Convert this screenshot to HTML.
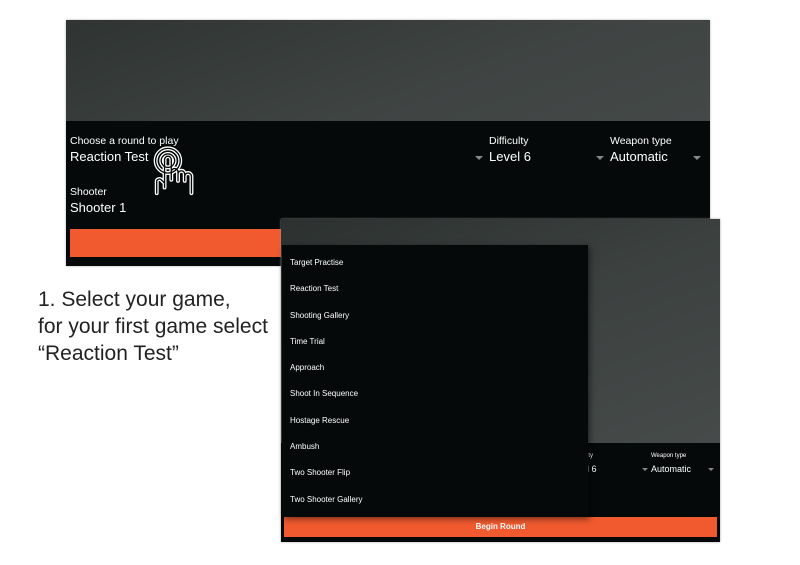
<!DOCTYPE html>
<html><head><style>
body{margin:0;width:800px;height:565px;background:#fff;position:relative;overflow:hidden;font-family:"Liberation Sans",sans-serif}
.abs{position:absolute}
.w{color:#fff}
.tri{position:absolute;width:0;height:0;border-left:4px solid transparent;border-right:4px solid transparent;border-top:4px solid #888}
.tri2{position:absolute;width:0;height:0;border-left:3px solid transparent;border-right:3px solid transparent;border-top:3px solid #888}
</style></head><body>
<div class="abs" style="left:66px;top:20px;width:644px;height:246px;background:#060909;box-shadow:0 0 2px #aaa">
 <div class="abs" style="left:0;top:0;width:644px;height:101px;background:linear-gradient(160deg,#2f3433 0%,#3f4443 60%,#444948 100%)"></div>
 <div class="abs w" style="left:4px;top:115px;font-size:10.5px">Choose a round to play</div>
 <div class="abs w" style="left:4px;top:129px;font-size:13px">Reaction Test</div>
 <div class="abs w" style="left:4px;top:166px;font-size:10.5px">Shooter</div>
 <div class="abs w" style="left:4px;top:180px;font-size:13px">Shooter 1</div>
 <div class="abs w" style="left:423px;top:115px;font-size:10.5px">Difficulty</div>
 <div class="tri" style="left:409px;top:136px"></div>
 <div class="abs w" style="left:423px;top:129px;font-size:13px">Level 6</div>
 <div class="abs w" style="left:544px;top:115px;font-size:10.5px">Weapon type</div>
 <div class="tri" style="left:530px;top:136px"></div>
 <div class="abs w" style="left:544px;top:129px;font-size:13px">Automatic</div>
 <div class="tri" style="left:627px;top:136px"></div>
 <div class="abs" style="left:4px;top:209px;width:636px;height:28px;background:#f15a2f"></div>
</div>
<svg class="abs" style="left:150px;top:145px" width="56" height="56" viewBox="0 0 50 50">
 <g fill="none" stroke="#fff" stroke-width="3.5" stroke-linecap="round" stroke-linejoin="round">
  <circle cx="16" cy="14" r="11"/><circle cx="16" cy="14" r="6"/>
  <path d="M13 38V13a3 3 0 0 1 6 0v18M19 24a3 3 0 0 1 6 0v8M25 26a3 3 0 0 1 6 0v6M31 28a3 3 0 0 1 6 0v15M13 34l-3-3a2.5 2.5 0 0 0-4 1l0 11"/>
 </g>
 <g fill="none" stroke="#060909" stroke-width="1.2" stroke-linecap="round" stroke-linejoin="round">
  <circle cx="16" cy="14" r="11"/><circle cx="16" cy="14" r="6"/>
  <path d="M13 38V13a3 3 0 0 1 6 0v18M19 24a3 3 0 0 1 6 0v8M25 26a3 3 0 0 1 6 0v6M31 28a3 3 0 0 1 6 0v15M13 34l-3-3a2.5 2.5 0 0 0-4 1l0 11"/>
 </g>
</svg>
<div class="abs" style="left:38px;top:286px;font-size:21px;line-height:27px;color:#222;white-space:nowrap">1. Select your game,<br>for your first game select<br>“Reaction Test”</div>
<div class="abs" style="left:281px;top:219px;width:439px;height:323px;background:#060909;box-shadow:0 0 2px #999">
 <div class="abs" style="left:0;top:0;width:439px;height:224px;background:linear-gradient(160deg,#2c3130 0%,#3c4140 45%,#464b4a 100%)"></div>
 <div class="abs w" style="left:306px;top:234px;font-size:6px">lty</div>
 <div class="abs w" style="left:306px;top:245px;font-size:9px">l 6</div>
 <div class="abs w" style="left:370px;top:234px;font-size:6px">Weapon type</div>
 <div class="tri2" style="left:361px;top:249px"></div>
 <div class="abs w" style="left:370px;top:245px;font-size:9px">Automatic</div>
 <div class="tri2" style="left:427px;top:249px"></div>
 <div class="abs" style="left:3px;top:298px;width:433px;height:20px;background:#f15a2f;color:#fff;font-size:8px;font-weight:bold;text-align:center;line-height:20px">Begin Round</div>
 <div class="abs" style="left:1px;top:26px;width:306px;height:272px;background:#060909;box-shadow:2px 2px 6px rgba(0,0,0,.5);color:#fff;font-size:8px">
  <div class="abs" style="left:8px;top:5px;line-height:26.3px">Target Practise<br>Reaction Test<br>Shooting Gallery<br>Time Trial<br>Approach<br>Shoot In Sequence<br>Hostage Rescue<br>Ambush<br>Two Shooter Flip<br>Two Shooter Gallery</div>
 </div>
</div>
</body></html>
